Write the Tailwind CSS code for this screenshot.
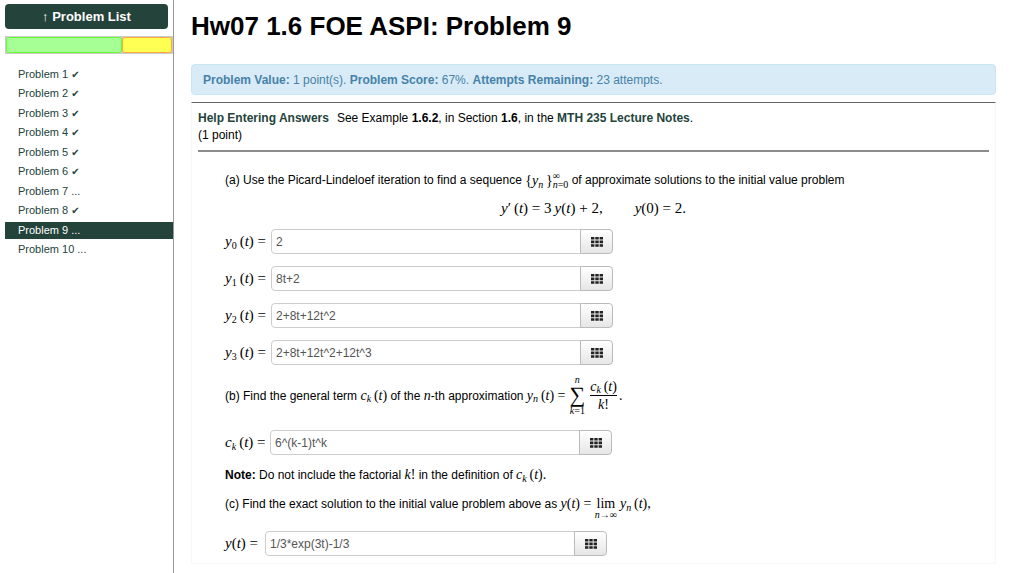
<!DOCTYPE html>
<html lang="en">

<head>
    <meta charset="UTF-8">
    <meta name="viewport" content="width=device-width, initial-scale=1.0">
    <title>Hw07 1.6 FOE ASPI: Problem 9</title>
    <script src="https://cdn.jsdelivr.net/npm/@tailwindcss/browser@4"></script>
</head>

<body class="bg-white text-black font-['Liberation_Sans',Arial,sans-serif] text-[12px]">

    <!-- Keypad icon shared by the answer buttons -->
    <svg class="hidden">
        <symbol id="keypad" viewBox="0 0 12 10">
            <path d="M0 0h3.4v2.6H0zM4.3 0h3.4v2.6H4.3zM8.6 0H12v2.6H8.6zM0 3.6h3.4v2.6H0zM4.3 3.6h3.4v2.6H4.3zM8.6 3.6H12v2.6H8.6zM0 7.2h3.4v2.6H0zM4.3 7.2h3.4v2.6H4.3zM8.6 7.2H12v2.6H8.6z" fill="#222" />
        </symbol>
    </svg>

    <div class="flex min-h-screen">

        <!-- Sidebar -->
        <aside class="w-[174px] shrink-0 border-r border-[#999] pl-[5px] pt-1">
            <button class="mr-[5px] flex h-[25px] w-[163px] items-center justify-center rounded-[4px] bg-[#23433b] text-[13px] font-bold text-white">↑ Problem List</button>
            <div class="mt-[7px] flex h-[18px] bg-[#ccc] p-px">
                <div class="grow-[117] rounded-[3px] border border-[#66ff33] bg-[#a5ff94]"></div>
                <div class="grow-[49] rounded-[3px] border border-[#ffa63d] bg-[#ffff54]"></div>
            </div>
            <nav class="mt-3">
                <ul class="text-[11px] text-[#23433b] leading-[17px]">
                    <li class="odd:mb-[2px] even:mb-[3px]"><a href="#" class="block pl-[13px]">Problem 1 <span class="font-['DejaVu_Sans'] text-[10px]">✔</span></a></li>
                    <li class="odd:mb-[2px] even:mb-[3px]"><a href="#" class="block pl-[13px]">Problem 2 <span class="font-['DejaVu_Sans'] text-[10px]">✔</span></a></li>
                    <li class="odd:mb-[2px] even:mb-[3px]"><a href="#" class="block pl-[13px]">Problem 3 <span class="font-['DejaVu_Sans'] text-[10px]">✔</span></a></li>
                    <li class="odd:mb-[2px] even:mb-[3px]"><a href="#" class="block pl-[13px]">Problem 4 <span class="font-['DejaVu_Sans'] text-[10px]">✔</span></a></li>
                    <li class="odd:mb-[2px] even:mb-[3px]"><a href="#" class="block pl-[13px]">Problem 5 <span class="font-['DejaVu_Sans'] text-[10px]">✔</span></a></li>
                    <li class="odd:mb-[2px] even:mb-[3px]"><a href="#" class="block pl-[13px]">Problem 6 <span class="font-['DejaVu_Sans'] text-[10px]">✔</span></a></li>
                    <li class="odd:mb-[2px] even:mb-[3px]"><a href="#" class="block pl-[13px]">Problem 7 ...</a></li>
                    <li class="odd:mb-[2px] even:mb-[3px]"><a href="#" class="block pl-[13px]">Problem 8 <span class="font-['DejaVu_Sans'] text-[10px]">✔</span></a></li>
                    <li class="odd:mb-[2px] even:mb-[3px]"><a href="#" class="block bg-[#23433b] pl-[13px] text-white">Problem 9 ...</a></li>
                    <li class="odd:mb-[2px] even:mb-[3px]"><a href="#" class="block pl-[13px]">Problem 10 ...</a></li>
                </ul>
            </nav>
        </aside>

        <!-- Main Content -->
        <main class="grow pl-[17px] pr-7 pt-2">
            <h1 class="text-[26px] font-bold leading-9">Hw07 1.6 FOE ASPI: Problem 9</h1>

            <div class="mt-5 flex h-[31px] items-center rounded-[4px] border border-[#c6e6f0] bg-[#d9ebf6] px-[11px] text-[#4682a9]">
                <p><b>Problem Value:</b> 1 point(s). <b>Problem Score:</b> 67%. <b>Attempts Remaining:</b> 23 attempts.</p>
            </div>

            <div class="mt-[7px] border border-[#f7f7f7] border-t-[#666] px-[6px] pb-[7px] pt-[7px]">
                <p class="leading-[17px]"><a href="#" class="mr-2 font-bold text-[#23433b]">Help Entering Answers</a>See Example <b>1.6.2</b>, in Section <b>1.6</b>, in the <a href="#" class="font-bold text-[#23433b]">MTH 235 Lecture Notes</a>.</p>
                <p class="leading-[17px]">(1 point)</p>
                <hr class="mt-[6px] border-t-2 border-[#8c8c8c]">

                <div class="px-[27px] pt-[18px]">
                    <!-- Part (a) -->
                    <p class="flex h-5 items-center whitespace-pre">(a) Use the Picard-Lindeloef iteration to find a sequence <span class="flex items-center font-['Liberation_Serif'] text-[14px]">{<i>y</i><i class="pt-2 text-[10px]">n</i>&thinsp;}<span class="flex flex-col text-[10px] leading-[9px]"><span>∞</span><span><i>n</i>=0</span></span></span> of approximate solutions to the initial value problem</p>
                    <p class="mt-2 flex h-5 items-center justify-center whitespace-pre font-['Liberation_Serif'] text-[15px]"><span><i>y</i>′&thinsp;(<i>t</i>) = 3&thinsp;<i>y</i>(<i>t</i>) + 2,</span><span class="ml-8"><i>y</i>(0) = 2.</span></p>

                    <div class="mt-[11px] flex flex-col gap-3">
                        <div class="flex h-[25px]">
                            <label for="y0" class="w-[46px] font-['Liberation_Serif'] text-[15px] leading-6"><i>y</i><sub class="text-[10px]">0</sub>&thinsp;(<i>t</i>) =</label>
                            <input id="y0" type="text" value="2" class="w-[310px] rounded-l-[4px] border border-[#ccc] px-1 text-[#555]">
                            <button aria-label="Equation editor" class="-ml-px flex w-[33px] items-center justify-center rounded-r-[4px] border border-[#bbb] bg-linear-to-b from-white to-[#e6e6e6]"><svg class="h-[10px] w-3"><use href="#keypad" /></svg></button>
                        </div>
                        <div class="flex h-[25px]">
                            <label for="y1" class="w-[46px] font-['Liberation_Serif'] text-[15px] leading-6"><i>y</i><sub class="text-[10px]">1</sub>&thinsp;(<i>t</i>) =</label>
                            <input id="y1" type="text" value="8t+2" class="w-[310px] rounded-l-[4px] border border-[#ccc] px-1 text-[#555]">
                            <button aria-label="Equation editor" class="-ml-px flex w-[33px] items-center justify-center rounded-r-[4px] border border-[#bbb] bg-linear-to-b from-white to-[#e6e6e6]"><svg class="h-[10px] w-3"><use href="#keypad" /></svg></button>
                        </div>
                        <div class="flex h-[25px]">
                            <label for="y2" class="w-[46px] font-['Liberation_Serif'] text-[15px] leading-6"><i>y</i><sub class="text-[10px]">2</sub>&thinsp;(<i>t</i>) =</label>
                            <input id="y2" type="text" value="2+8t+12t^2" class="w-[310px] rounded-l-[4px] border border-[#ccc] px-1 text-[#555]">
                            <button aria-label="Equation editor" class="-ml-px flex w-[33px] items-center justify-center rounded-r-[4px] border border-[#bbb] bg-linear-to-b from-white to-[#e6e6e6]"><svg class="h-[10px] w-3"><use href="#keypad" /></svg></button>
                        </div>
                        <div class="flex h-[25px]">
                            <label for="y3" class="w-[46px] font-['Liberation_Serif'] text-[15px] leading-6"><i>y</i><sub class="text-[10px]">3</sub>&thinsp;(<i>t</i>) =</label>
                            <input id="y3" type="text" value="2+8t+12t^2+12t^3" class="w-[310px] rounded-l-[4px] border border-[#ccc] px-1 text-[#555]">
                            <button aria-label="Equation editor" class="-ml-px flex w-[33px] items-center justify-center rounded-r-[4px] border border-[#bbb] bg-linear-to-b from-white to-[#e6e6e6]"><svg class="h-[10px] w-3"><use href="#keypad" /></svg></button>
                        </div>
                    </div>

                    <!-- Part (b) -->
                    <div class="mt-[10px] flex h-10 items-center whitespace-pre">
                        <p>(b) Find the general term <span class="font-['Liberation_Serif'] text-[14px]"><i>c</i><sub class="text-[10px]"><i>k</i></sub>&thinsp;(<i>t</i>)</span> of the <i class="font-['Liberation_Serif'] text-[14px]">n</i>-th approximation <span class="font-['Liberation_Serif'] text-[14px]"><i>y</i><sub class="text-[10px]"><i>n</i></sub>&thinsp;(<i>t</i>) =</span></p>
                        <div class="ml-1 flex flex-col items-center font-['Liberation_Serif'] text-[10px] leading-[9px]">
                            <i>n</i>
                            <span class="text-[22px] leading-[22px]">∑</span>
                            <span><i>k</i>=1</span>
                        </div>
                        <div class="ml-[5px] flex flex-col items-center font-['Liberation_Serif'] text-[14px] leading-[17px]">
                            <span class="border-b border-black"><i>c</i><sub class="text-[10px]"><i>k</i></sub>&thinsp;(<i>t</i>)</span>
                            <span><i>k</i>!</span>
                        </div>
                        <span class="ml-[2px] font-['Liberation_Serif'] text-[14px]">.</span>
                    </div>
                    <div class="mt-[15px] flex h-[25px]">
                        <label for="ck" class="w-[45px] font-['Liberation_Serif'] text-[15px] leading-6"><i>c</i><sub class="text-[10px]"><i>k</i></sub>&thinsp;(<i>t</i>) =</label>
                        <input id="ck" type="text" value="6^(k-1)t^k" class="w-[310px] rounded-l-[4px] border border-[#ccc] px-1 text-[#555]">
                        <button aria-label="Equation editor" class="-ml-px flex w-[33px] items-center justify-center rounded-r-[4px] border border-[#bbb] bg-linear-to-b from-white to-[#e6e6e6]"><svg class="h-[10px] w-3"><use href="#keypad" /></svg></button>
                    </div>
                    <p class="mt-[10px] h-5 leading-5"><b>Note:</b> Do not include the factorial <span class="font-['Liberation_Serif'] text-[14px]"><i>k</i>!</span> in the definition of <span class="font-['Liberation_Serif'] text-[14px]"><i>c</i><sub class="text-[10px]"><i>k</i></sub>&thinsp;(<i>t</i>).</span></p>

                    <!-- Part (c) -->
                    <div class="mt-[9px] flex h-5 whitespace-pre leading-5">
                        <p>(c) Find the exact solution to the initial value problem above as <span class="font-['Liberation_Serif'] text-[14px]"><i>y</i>(<i>t</i>) = </span></p>
                        <div class="flex flex-col items-center font-['Liberation_Serif']">
                            <span class="text-[14px] leading-5">lim</span>
                            <span class="-mt-1 text-[10px] leading-[9px]"><i>n</i>→∞</span>
                        </div>
                        <p class="ml-[3px] font-['Liberation_Serif'] text-[14px]"><i>y</i><sub class="text-[10px]"><i>n</i></sub>&thinsp;(<i>t</i>),</p>
                    </div>
                    <div class="mt-[17px] flex h-[25px]">
                        <label for="y" class="w-10 font-['Liberation_Serif'] text-[15px] leading-6"><i>y</i>(<i>t</i>) =</label>
                        <input id="y" type="text" value="1/3*exp(3t)-1/3" class="w-[310px] rounded-l-[4px] border border-[#ccc] px-1 text-[#555]">
                        <button aria-label="Equation editor" class="-ml-px flex w-[33px] items-center justify-center rounded-r-[4px] border border-[#bbb] bg-linear-to-b from-white to-[#e6e6e6]"><svg class="h-[10px] w-3"><use href="#keypad" /></svg></button>
                    </div>
                </div>
            </div>
        </main>
    </div>
</body>

</html>
